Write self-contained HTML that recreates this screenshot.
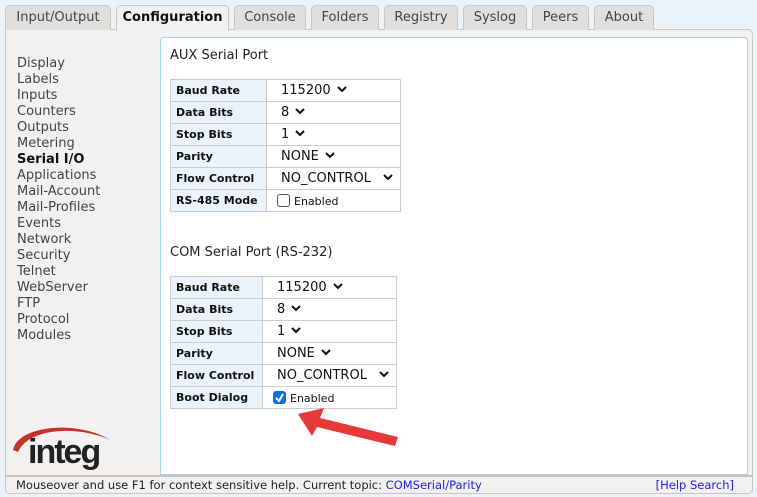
<!DOCTYPE html>
<html><head><style>
*{margin:0;padding:0;box-sizing:border-box}
body{width:757px;height:497px;background:#eaf2fa;font-family:"DejaVu Sans","Liberation Sans",sans-serif;font-size:12.5px;color:#333;position:relative;overflow:hidden}
.tab{position:absolute;top:5px;height:25px;background:#e1dfdd;border:1px solid #cbc6c0;border-bottom:none;border-radius:5px 5px 0 0;text-align:center;line-height:24px;font-size:13px;color:#444}
.tab.act{background:#f2f1ef;color:#111;font-weight:bold;height:26px}
.outer{position:absolute;left:5px;top:29px;width:748px;height:465px;background:#f2f1ef;border:1px solid #cbc6c0;border-radius:0 5px 5px 5px}
.side{position:absolute;left:17px;top:55px;line-height:16px;font-size:13px;color:#444}
.side b{color:#111}
.inner{position:absolute;left:160px;top:37px;width:588px;height:438px;background:#fff;border:1px solid #a9d6ef;border-radius:4px 4px 0 0}
h3{position:absolute;left:170px;font-weight:normal;font-size:13px;color:#222}
table{position:absolute;left:170px;border-collapse:collapse;font-size:12px;table-layout:fixed}
td{border:1px solid #ccc;height:22px;padding:0 5px;color:#111;white-space:nowrap;overflow:hidden}
td.l{background:#eaf3fb;font-weight:bold;font-size:11px}
td.v{padding-left:14px;font-size:13px}
.cb{display:inline-block;width:13px;height:13px;border:1px solid #555;border-radius:3px;vertical-align:-2px;margin-right:4px;position:relative}
.cb.on{background:#0b6fe0;border-color:#0b6fe0}
.chev{display:inline-block;width:10px;height:7px;margin-left:6px;vertical-align:1px}
.status{position:absolute;left:6px;top:475px;width:746px;height:18px;border-top:2px solid #c8c3bc;font-size:11.5px;color:#222;line-height:17px;padding-left:10px}
.status a{color:#2222dd;text-decoration:none}
</style></head><body>
<div class="outer"></div>
<div class="tab" style="left:5px;width:106px">Input/Output</div>
<div class="tab act" style="left:116px;width:113px">Configuration</div>
<div class="tab" style="left:234px;width:72px">Console</div>
<div class="tab" style="left:311px;width:68px">Folders</div>
<div class="tab" style="left:384px;width:74px">Registry</div>
<div class="tab" style="left:463px;width:64px">Syslog</div>
<div class="tab" style="left:532px;width:57px">Peers</div>
<div class="tab" style="left:594px;width:60px">About</div>
<div class="side" style="top:56px">Display<br>Labels<br>Inputs<br>Counters<br>Outputs<br>Metering<br><b>Serial I/O</b><br>Applications<br>Mail-Account<br>Mail-Profiles<br>Events<br>Network<br>Security<br>Telnet<br>WebServer<br>FTP<br>Protocol<br>Modules</div>
<svg style="position:absolute;left:8px;top:420px" width="105" height="50">
<path d="M5 30 C10 5 70 0 102 20 C70 5 20 8 10 32 Z" fill="#c8302a"/>
<text x="20" y="43" font-family="Liberation Sans" font-weight="bold" font-size="34" fill="#222" letter-spacing="-2">integ</text>
</svg>
<div class="inner"></div>
<h3 style="top:48px">AUX Serial Port</h3>
<table style="top:79px;width:231px">
<col style="width:96px"><col>
<tr><td class="l">Baud Rate</td><td class="v">115200<svg class="chev"><path d="M1 1 L5 5 L9 1" stroke="#111" stroke-width="2" fill="none"/></svg></td></tr>
<tr><td class="l">Data Bits</td><td class="v">8<svg class="chev"><path d="M1 1 L5 5 L9 1" stroke="#111" stroke-width="2" fill="none"/></svg></td></tr>
<tr><td class="l">Stop Bits</td><td class="v">1<svg class="chev"><path d="M1 1 L5 5 L9 1" stroke="#111" stroke-width="2" fill="none"/></svg></td></tr>
<tr><td class="l">Parity</td><td class="v">NONE<svg class="chev"><path d="M1 1 L5 5 L9 1" stroke="#111" stroke-width="2" fill="none"/></svg></td></tr>
<tr><td class="l">Flow Control</td><td class="v">NO_CONTROL<svg class="chev" style="margin-left:12px"><path d="M1 1 L5 5 L9 1" stroke="#111" stroke-width="2" fill="none"/></svg></td></tr>
<tr><td class="l">RS-485 Mode</td><td class="v" style="padding-left:10px;font-size:11px"><span class="cb"></span>Enabled</td></tr>
</table>
<h3 style="top:245px">COM Serial Port (RS-232)</h3>
<table style="top:276px;width:227px">
<col style="width:92px"><col>
<tr><td class="l">Baud Rate</td><td class="v">115200<svg class="chev"><path d="M1 1 L5 5 L9 1" stroke="#111" stroke-width="2" fill="none"/></svg></td></tr>
<tr><td class="l">Data Bits</td><td class="v">8<svg class="chev"><path d="M1 1 L5 5 L9 1" stroke="#111" stroke-width="2" fill="none"/></svg></td></tr>
<tr><td class="l">Stop Bits</td><td class="v">1<svg class="chev"><path d="M1 1 L5 5 L9 1" stroke="#111" stroke-width="2" fill="none"/></svg></td></tr>
<tr><td class="l">Parity</td><td class="v">NONE<svg class="chev"><path d="M1 1 L5 5 L9 1" stroke="#111" stroke-width="2" fill="none"/></svg></td></tr>
<tr><td class="l">Flow Control</td><td class="v">NO_CONTROL<svg class="chev" style="margin-left:12px"><path d="M1 1 L5 5 L9 1" stroke="#111" stroke-width="2" fill="none"/></svg></td></tr>
<tr><td class="l">Boot Dialog</td><td class="v" style="padding-left:10px;font-size:11px"><span class="cb on"><svg width="13" height="13" style="position:absolute;left:-1px;top:-1px"><path d="M3 7 L6 10 L10 3" stroke="#fff" stroke-width="2" fill="none"/></svg></span>Enabled</td></tr>
</table>
<svg style="position:absolute;left:292px;top:408px" width="115" height="45">
<path d="M6 6 L32 0 L28 10 L106 29 L103 38 L25 19 L20 28 Z" fill="#e8383a"/>
</svg>
<div class="status">Mouseover and use F1 for context sensitive help. Current topic: <a>COMSerial/Parity</a><a style="position:absolute;right:18px">[Help Search]</a></div>
</body></html>
